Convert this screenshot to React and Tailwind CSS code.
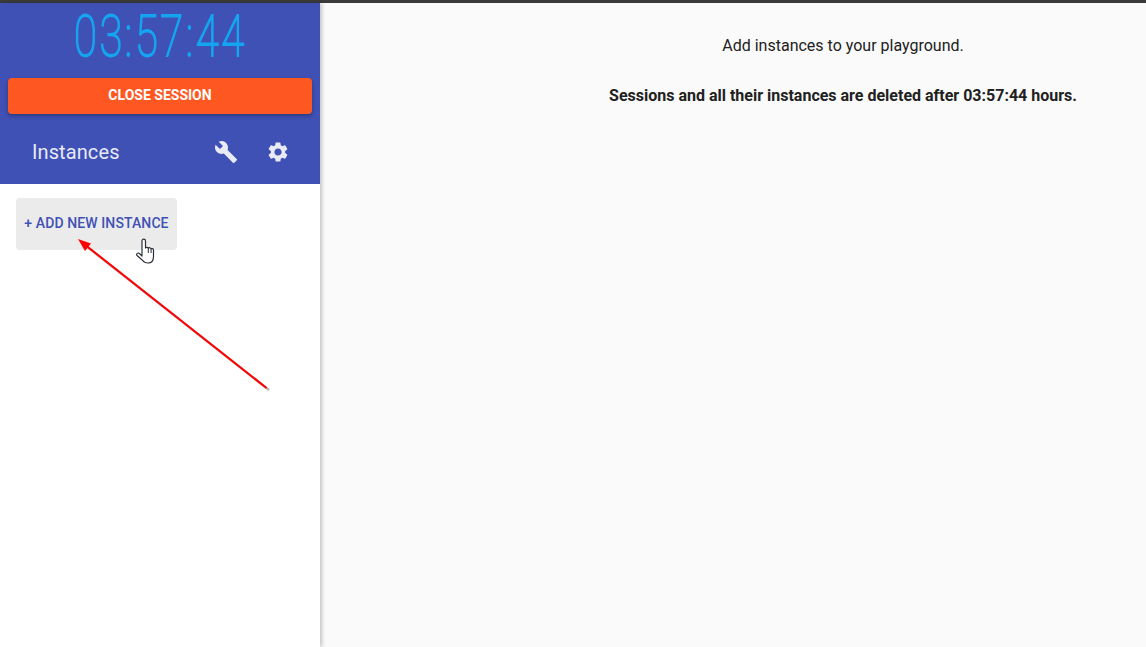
import React from "react";
import { MdBuild, MdSettings } from "react-icons/md";

function HandCursor() {
  return (
    <svg className="absolute left-[136px] top-[238px]" width="20" height="27" viewBox="0 0 20 27">
      <path
        d="M6 3c0-2.500 3.500-2.500 3.500 0V10c.6-1 2.400-1 2.800.3.6-.9 2.400-.8 2.800.5.7-.6 2.400-.3 2.400 1.200v6.500c0 3.500-1.800 6.500-5.500 6.500-3 0-4.400-1-5.800-3L1 17.500c-1.100-1.800 1-3.200 2.400-2L6 18z"
        fill="white"
        stroke="#2b2f36"
        strokeWidth="1.2"
        strokeLinejoin="round"
      />
      <path d="M12.300 10.300V15M15.100 10.800V15" stroke="#2b2f36" strokeWidth="1" fill="none" />
    </svg>
  );
}

function RedArrow() {
  return (
    <svg className="absolute left-0 top-0 pointer-events-none" width="320" height="420" viewBox="0 0 320 420">
      <path d="M269 390 L88 247.500" stroke="#000" strokeOpacity="0.3" strokeWidth="2.500" fill="none" />
      <path d="M266.500 388 L84 244" stroke="#ff0000" strokeWidth="2" fill="none" />
      <path d="M78 239 L91 243.500 L85 251 Z" fill="#ff0000" />
    </svg>
  );
}

export default function App() {
  return (
    <div className="relative flex flex-col h-[647px] w-[1146px] overflow-hidden bg-[#fafafa] font-['Roboto',sans-serif] text-[#212121]">
      <div className="h-[3px] bg-[#3b3b3b]" />
      <div className="flex flex-1 min-h-0">
        <aside className="w-[320px] shrink-0 bg-white flex flex-col shadow-[2px_0_4px_rgba(0,0,0,0.22)] z-10">
          <div className="h-[181px] bg-[#3f51b5] flex flex-col">
            <div className="h-[75px] flex items-center justify-center pb-[7px] overflow-hidden">
              <span className="font-['Roboto',sans-serif] font-thin text-[#15a4ef] text-[48px] leading-none tracking-[3px] [-webkit-text-stroke:1.5px_#15a4ef] scale-x-[0.87] scale-y-[1.2]">
                03:57:44
              </span>
            </div>
            <button className="mx-2 h-9 pb-[2px] rounded-sm bg-[#ff5722] text-white text-sm font-bold shadow-[0_2px_4px_rgba(0,0,0,0.3)]">
              CLOSE SESSION
            </button>
            <div className="flex items-center pl-8 mt-[20px]">
              <span className="text-xl text-[#e8eaf6] w-[182px] leading-[36px] tracking-[0.1px]">Instances</span>
              <MdBuild className="text-[#e8eaf6] mr-[28px]" size={24} />
              <MdSettings className="text-[#e8eaf6]" size={24} />
            </div>
          </div>
          <div className="pl-4 pt-[14px]">
            <button className="h-[52px] w-[161px] pb-[2px] rounded-sm bg-[#ebebeb] text-[#3f51b5] text-sm font-medium tracking-[0.1px]">
              + ADD NEW INSTANCE
            </button>
          </div>
        </aside>
        <main className="flex-1 pl-[220px] pt-[34px] text-center text-base">
          <p className="leading-[18px]">Add instances to your playground.</p>
          <p className="mt-[32px] leading-[18px] font-bold">Sessions and all their instances are deleted after 03:57:44 hours.</p>
        </main>
      </div>
      <div className="absolute inset-0 z-20 pointer-events-none">
        <RedArrow />
        <HandCursor />
      </div>
    </div>
  );
}
